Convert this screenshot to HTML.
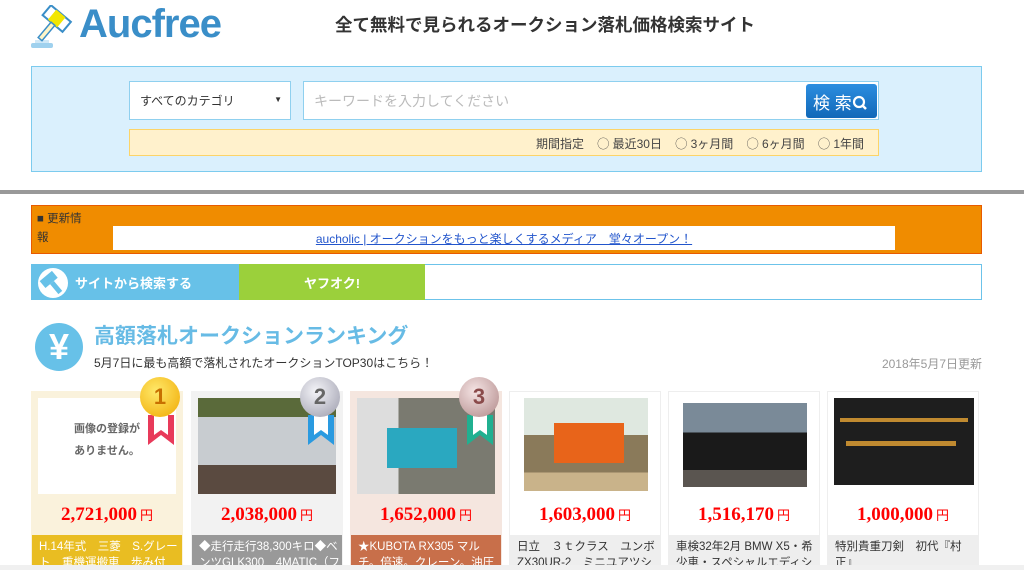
<!DOCTYPE html>
<html><head><meta charset="utf-8"><style>
*{margin:0;padding:0;box-sizing:border-box}
html,body{width:1024px;height:570px;overflow:hidden}
body{background:#fff;font-family:"Liberation Sans","Noto Sans CJK JP",sans-serif;position:relative;color:#333}
.a{position:absolute}
.card{position:absolute;top:391px;width:152px;height:190px;border:1px solid #eee}
.card .img{position:absolute;left:6px;top:6px;width:138px;height:96px;background:#fff}
.card .pr{position:absolute;left:0;width:100%;top:112px;text-align:center;color:#f00;font-family:"Liberation Serif","Noto Serif CJK SC",serif;font-weight:bold;font-size:19px}
.card .pr span{font-size:13px;font-weight:normal;font-family:"Liberation Sans","Noto Sans CJK JP",sans-serif;margin-left:3px}
.card .lb{position:absolute;left:0;top:143px;width:100%;height:60px;padding:4px 7px;font-size:11.5px;line-height:16px;color:#fff;white-space:nowrap;overflow:hidden}
.medal{position:absolute;width:40px;height:40px;border-radius:50%;text-align:center;line-height:40px;font-size:22px;font-weight:bold}
</style></head><body>
<svg class="a" style="left:31px;top:5px" width="50" height="44" viewBox="0 0 50 44">
<rect x="0" y="38" width="22" height="5" rx="2" fill="#9fd1ee"/>
<rect x="4" y="35" width="14" height="3" fill="#cfe8f7"/>
<g transform="rotate(40 24 14)"><rect x="12" y="6" width="26" height="13" fill="#fff" stroke="#3a8ec8" stroke-width="2"/><rect x="19" y="6" width="12" height="13" fill="#f2e600"/><rect x="23" y="19" width="5" height="20" fill="#fff5c8" stroke="#3a8ec8" stroke-width="1.5"/></g>
</svg>
<div class="a" style="left:79px;top:2px;font-size:40px;font-weight:bold;color:#3a8ec8;letter-spacing:-1px">Aucfree</div>
<div class="a" style="left:335px;top:12px;font-size:17.5px;font-weight:bold;color:#333">全て無料で見られるオークション落札価格検索サイト</div>
<div class="a" style="left:31px;top:66px;width:951px;height:106px;background:#daf0fd;border:1px solid #7ccbee"></div>
<div class="a" style="left:129px;top:81px;width:162px;height:39px;background:#fff;border:1px solid #8fd0ef;font-size:12px;padding:10px 10px">すべてのカテゴリ<span style="position:absolute;right:8px;top:13px;font-size:8px">▼</span></div>
<div class="a" style="left:303px;top:81px;width:576px;height:39px;background:#fff;border:1px solid #8fd0ef;font-size:14px;color:#bbb;padding:9px 10px">キーワードを入力してください</div>
<div class="a" style="left:806px;top:84px;width:71px;height:34px;background:linear-gradient(#2c8ee0,#1168b8);border-radius:3px;color:#fff;font-size:17px;padding:5px 7px">検 索<svg width="16" height="16" viewBox="0 0 16 16" style="vertical-align:-2px"><circle cx="7" cy="7" r="5" fill="none" stroke="#fff" stroke-width="2.2"/><path d="M10.5 10.5L14 14" stroke="#fff" stroke-width="2.5"/></svg></div>
<div class="a" style="left:129px;top:129px;width:750px;height:27px;background:#fff1cc;border:1px solid #fcd468;font-size:12px;color:#444;text-align:right;padding:5px 14px">期間指定 &nbsp;&nbsp; ◯ 最近30日 &nbsp;&nbsp; ◯ 3ヶ月間 &nbsp;&nbsp; ◯ 6ヶ月間 &nbsp;&nbsp; ◯ 1年間</div>
<div class="a" style="left:0;top:190px;width:1024px;height:4px;background:#999"></div>
<div class="a" style="left:31px;top:205px;width:951px;height:49px;background:#f08c00;border:1px solid #e85a00"></div>
<div class="a" style="left:37px;top:210px;font-size:11.5px;color:#333;line-height:19px">■ 更新情<br>報</div>
<div class="a" style="left:113px;top:226px;width:782px;height:24px;background:#fff;text-align:center;font-size:12px;padding-top:4px"><span style="color:#2255cc;text-decoration:underline">aucholic | オークションをもっと楽しくするメディア　堂々オープン！</span></div>
<div class="a" style="left:31px;top:264px;width:951px;height:36px;border:1px solid #6cc3ea"></div>
<div class="a" style="left:31px;top:264px;width:208px;height:36px;background:#67c1e8;color:#fff;font-weight:bold;font-size:13px;padding:9px 0 0 44px">サイトから検索する</div>
<svg class="a" style="left:37px;top:267px" width="32" height="32" viewBox="0 0 32 32"><circle cx="16" cy="16" r="15" fill="#fff"/><g transform="rotate(-40 16 16)"><rect x="7" y="6" width="16" height="9" fill="#67c1e8"/><rect x="13" y="15" width="5" height="13" fill="#67c1e8"/></g></svg>
<div class="a" style="left:239px;top:264px;width:186px;height:36px;background:#9bd03b;color:#fff;font-weight:bold;font-size:13px;text-align:center;padding-top:9px">ヤフオク!</div>
<div class="a" style="left:35px;top:323px;width:48px;height:48px;border-radius:50%;background:#67c1e8;color:#fff;font-size:36px;text-align:center;line-height:48px;font-weight:bold">¥</div>
<div class="a" style="left:94px;top:320px;font-size:21px;color:#67bbe5;font-weight:bold">高額落札オークションランキング</div>
<div class="a" style="left:94px;top:354px;font-size:12px;color:#333">5月7日に最も高額で落札されたオークションTOP30はこちら！</div>
<div class="a" style="right:42px;top:355px;font-size:12px;color:#999">2018年5月7日更新</div>
<div class="card" style="left:31px;background:#faf2dc;border-color:#faf2dc"><div class="img" style="font-size:11px;font-weight:bold;color:#666;text-align:center;padding-top:20px;line-height:22px">画像の登録が<br>ありません。</div><div class="pr">2,721,000<span>円</span></div><div class="lb" style="background:#e9bd22">H.14年式　三菱　S.グレー<br>ト　重機運搬車　歩み付</div></div>
<div class="card" style="left:191px;background:#f2f2f2;border-color:#f2f2f2"><div class="img" style="background:linear-gradient(#5a6a3a 0 20%,#c8ccd0 20% 70%,#5a4a40 70%)"></div><div class="pr">2,038,000<span>円</span></div><div class="lb" style="background:#999">◆走行走行38,300キロ◆ベ<br>ンツGLK300　4MATIC（フ</div></div>
<div class="card" style="left:350px;background:#f5e6df;border-color:#f5e6df"><div class="img" style="background:linear-gradient(90deg,#ddd 0 30%,#7a7a70 30%);"><div style="position:absolute;left:30px;top:30px;width:70px;height:40px;background:#2aa8c0"></div></div><div class="pr">1,652,000<span>円</span></div><div class="lb" style="background:#c86f4a">★KUBOTA RX305 マル<br>チ。倍速。クレーン。油圧</div></div>
<div class="card" style="left:509px"><div class="img" style="left:14px;width:124px;height:93px;background:linear-gradient(#dfe8e0 0 40%,#8a7a5a 40% 80%,#c9b38a 80%)"><div style="position:absolute;left:30px;top:25px;width:70px;height:40px;background:#e8641a"></div></div><div class="pr">1,603,000<span>円</span></div><div class="lb" style="background:#eee;color:#333">日立　３ｔクラス　ユンボ<br>ZX30UR-2　ミニユアツシ</div></div>
<div class="card" style="left:668px"><div class="img" style="left:14px;top:11px;width:124px;height:84px;background:linear-gradient(#7a8a98 0 35%,#1a1a1a 35% 80%,#5a5550 80%)"></div><div class="pr">1,516,170<span>円</span></div><div class="lb" style="background:#eee;color:#333">車検32年2月 BMW X5・希<br>少車・スペシャルエディシ</div></div>
<div class="card" style="left:827px"><div class="img" style="left:6px;width:140px;height:87px;background:#1e1e1e"><div style="position:absolute;left:6px;top:20px;width:128px;height:4px;background:#c08a30"></div><div style="position:absolute;left:12px;top:43px;width:110px;height:5px;background:#c08a30"></div></div><div class="pr">1,000,000<span>円</span></div><div class="lb" style="background:#eee;color:#333">特別貴重刀剣　初代『村<br>正』</div></div>
<svg class="a" style="left:146px;top:415px" width="32" height="32"><path d="M2 0h26v30l-13-10-13 10z" fill="#e83a5a"/><path d="M8 0h14v20l-7-5-7 5z" fill="#fff"/></svg>
<div class="a medal" style="left:140px;top:377px;background:radial-gradient(circle at 40% 35%,#ffe96a,#f0a800);color:#c87000">1</div>
<svg class="a" style="left:306px;top:415px" width="32" height="32"><path d="M2 0h26v30l-13-10-13 10z" fill="#2a9ae0"/><path d="M8 0h14v20l-7-5-7 5z" fill="#fff"/></svg>
<div class="a medal" style="left:300px;top:377px;background:radial-gradient(circle at 40% 35%,#f4f4f8,#9a9aaa);color:#666">2</div>
<svg class="a" style="left:465px;top:415px" width="32" height="32"><path d="M2 0h26v30l-13-10-13 10z" fill="#20b090"/><path d="M8 0h14v20l-7-5-7 5z" fill="#fff"/></svg>
<div class="a medal" style="left:459px;top:377px;background:radial-gradient(circle at 40% 35%,#f5e4e4,#b08888);color:#8a4a4a">3</div>
<div class="a" style="left:0;top:565px;width:1024px;height:5px;background:#f0f0f0"></div>
</body></html>
